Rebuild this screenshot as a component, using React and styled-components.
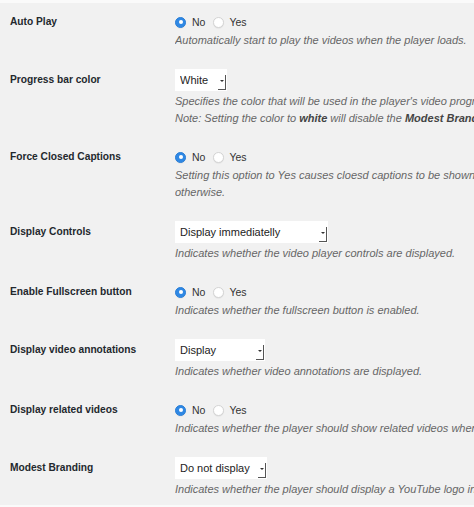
import React from "react";
import styled, { createGlobalStyle } from "styled-components";

const GlobalStyle = createGlobalStyle`
	html, body {
		margin: 0;
		padding: 0;
		background: #f1f1f1;
		overflow: hidden;
	}
	body {
		font-family: "Liberation Sans", Arial, sans-serif;
		color: #23282d;
	}
`;

const settings = [
	{
		label: "Auto Play",
		type: "radio",
		desc: ["Automatically start to play the videos when the player loads."],
	},
	{
		label: "Progress bar color",
		type: "select",
		value: "White",
		width: 52,
		desc: [
			"Specifies the color that will be used in the player's video progress bar.",
			<>
				Note: Setting the color to <b>white</b> will disable the <b>Modest Branding</b> option.
			</>,
		],
	},
	{
		label: "Force Closed Captions",
		type: "radio",
		desc: [
			"Setting this option to Yes causes cloesd captions to be shown by default, even if the user has turned captions off",
			"otherwise.",
		],
	},
	{
		label: "Display Controls",
		type: "select",
		value: "Display immediatelly",
		width: 153,
		desc: ["Indicates whether the video player controls are displayed."],
	},
	{
		label: "Enable Fullscreen button",
		type: "radio",
		desc: ["Indicates whether the fullscreen button is enabled."],
	},
	{
		label: "Display video annotations",
		type: "select",
		value: "Display",
		width: 90,
		desc: ["Indicates whether video annotations are displayed."],
	},
	{
		label: "Display related videos",
		type: "radio",
		desc: ["Indicates whether the player should show related videos when playback ends."],
	},
	{
		label: "Modest Branding",
		type: "select",
		value: "Do not display",
		width: 92,
		desc: ["Indicates whether the player should display a YouTube logo in the control bar."],
	},
];

const App = () => {
	return (
		<>
			<GlobalStyle />
			<Panel>
				{settings.map((item, index) => {
					const { label, type, value, width, desc } = item;
					return (
						<Row key={index}>
							<Label $ctrl={type}>{label}</Label>
							<Field>
								{type === "radio" ? (
									<RadioGroup>
										<Radio $checked />
										<RadioText>No</RadioText>
										<Radio />
										<RadioText>Yes</RadioText>
									</RadioGroup>
								) : (
									<Select style={{ width }}>
										<SelectValue>{value}</SelectValue>
										<ArrowBox>
											<Caret />
										</ArrowBox>
									</Select>
								)}
								<Desc>
									{desc.map((line, i) => (
										<DescLine key={i}>{line}</DescLine>
									))}
								</Desc>
							</Field>
						</Row>
					);
				})}
			</Panel>
		</>
	);
};

export default App;

const Panel = styled.div`
	width: 474px;
	height: 507px;
	box-sizing: border-box;
	border-top: 3px solid #fafafa;
	border-bottom: 2px solid #fafafa;
	overflow: hidden;
`;

const Row = styled.div`
	display: grid;
	grid-template-columns: 165px 1fr;
	padding: 9px 0 11px 10px;
`;

const Label = styled.div`
	font-size: 10.2px;
	font-weight: 700;
	line-height: ${(p) => (p.$ctrl === "radio" ? "20px" : "22px")};
	color: #23282d;
	white-space: nowrap;
`;

const Field = styled.div`
	min-width: 0;
	overflow: hidden;
`;

const RadioGroup = styled.div`
	display: flex;
	align-items: center;
	height: 20px;
`;

const Radio = styled.span`
	width: 11px;
	height: 11px;
	border-radius: 50%;
	box-sizing: border-box;
	display: flex;
	align-items: center;
	justify-content: center;
	background: ${(p) => (p.$checked ? "#2f88e4" : "#ffffff")};
	border: 1px solid ${(p) => (p.$checked ? "#2a7fd8" : "#d4d4d4")};
	box-shadow: 0 0.5px 1px rgba(0, 0, 0, 0.08);
	&::after {
		content: "";
		width: 4px;
		height: 4px;
		border-radius: 50%;
		background: #fff;
		display: ${(p) => (p.$checked ? "block" : "none")};
	}
`;

const RadioText = styled.span`
	font-size: 10.5px;
	color: #333;
	margin: 0 8px 0 6px;
	&:last-child {
		margin-left: 5px;
	}
`;

const Select = styled.div`
	display: flex;
	align-items: stretch;
	height: 22px;
	margin-bottom: 2px;
	background: #fff;
	box-sizing: border-box;
	padding: 0 1px 0 5px;
`;

const SelectValue = styled.span`
	flex: 1;
	font-size: 11px;
	line-height: 22px;
	color: #222;
	white-space: nowrap;
	overflow: hidden;
`;

const ArrowBox = styled.span`
	width: 8px;
	height: 15px;
	align-self: flex-end;
	margin-bottom: 1px;
	border-right: 1px solid #555;
	border-bottom: 1px solid #555;
	display: flex;
	align-items: flex-start;
	justify-content: center;
	padding-top: 5px;
	box-sizing: border-box;
`;

const Caret = styled.span`
	width: 0;
	height: 0;
	border-left: 2px solid transparent;
	border-right: 2px solid transparent;
	border-top: 2px solid #333;
`;

const Desc = styled.div`
	font-size: 11px;
	font-style: italic;
	line-height: 17px;
	color: #666;
`;

const DescLine = styled.div`
	white-space: nowrap;
	b {
		color: #444;
	}
`;
